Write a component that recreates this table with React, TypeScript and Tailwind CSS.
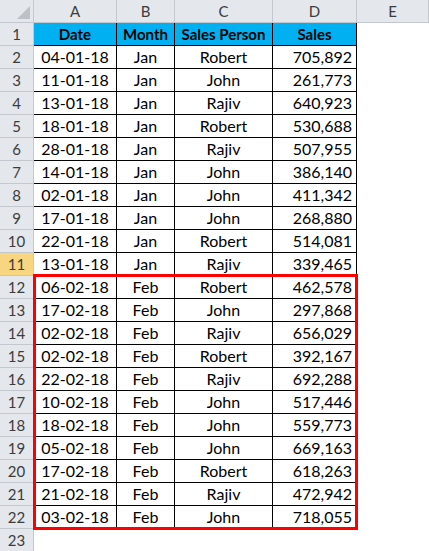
const rows: [string, string, string, string][] = [
  ["04-01-18", "Jan", "Robert", "705,892"],
  ["11-01-18", "Jan", "John", "261,773"],
  ["13-01-18", "Jan", "Rajiv", "640,923"],
  ["18-01-18", "Jan", "Robert", "530,688"],
  ["28-01-18", "Jan", "Rajiv", "507,955"],
  ["14-01-18", "Jan", "John", "386,140"],
  ["02-01-18", "Jan", "John", "411,342"],
  ["17-01-18", "Jan", "John", "268,880"],
  ["22-01-18", "Jan", "Robert", "514,081"],
  ["13-01-18", "Jan", "Rajiv", "339,465"],
  ["06-02-18", "Feb", "Robert", "462,578"],
  ["17-02-18", "Feb", "John", "297,868"],
  ["02-02-18", "Feb", "Rajiv", "656,029"],
  ["02-02-18", "Feb", "Robert", "392,167"],
  ["22-02-18", "Feb", "Rajiv", "692,288"],
  ["10-02-18", "Feb", "John", "517,446"],
  ["18-02-18", "Feb", "John", "559,773"],
  ["05-02-18", "Feb", "John", "669,163"],
  ["17-02-18", "Feb", "Robert", "618,263"],
  ["21-02-18", "Feb", "Rajiv", "472,942"],
  ["03-02-18", "Feb", "John", "718,055"],
];

const cols = "grid grid-cols-[34px_83px_58px_98px_84px_1fr]";
const rowHead = "flex h-[23px] items-center justify-center border-r border-b border-[#c3c8ce] text-[15px] text-[#3c3c3c]";
const cell = "flex h-[23px] items-center border-r border-b border-black";

function RowHeader({ n }: { n: number }) {
  return (
    <div className={rowHead + (n === 11 ? " bg-[#f8d580]" : " bg-[#e4e7eb]")}>{n}</div>
  );
}

export default function App() {
  return (
    <div
      className="relative h-[551px] w-[429px] overflow-hidden bg-white text-[16px] leading-none text-black"
      style={{ fontFamily: "Lato, 'Open Sans', sans-serif" }}
    >
      {/* column letters */}
      <div className={cols}>
        <div className="relative h-[23px] border-r border-b border-[#c3c8ce] bg-[#e4e7eb]">
          <svg className="absolute right-[3px] bottom-[3px]" width="13" height="13" viewBox="0 0 13 13">
            <polygon points="13,0 13,13 0,13" fill="#bcc1c7" />
          </svg>
        </div>
        {["A", "B", "C", "D", "E"].map((c) => (
          <div key={c} className="flex h-[23px] items-center justify-center border-r border-b border-[#c3c8ce] bg-[#e4e7eb] text-[15px] text-[#3c3c3c]">
            {c}
          </div>
        ))}
      </div>

      {/* header row */}
      <div className={cols}>
        <RowHeader n={1} />
        {["Date", "Month", "Sales Person", "Sales"].map((h) => (
          <div key={h} className={cell + " justify-center bg-[#00b0f0] text-[15px] font-bold"}>
            {h}
          </div>
        ))}
        <div />
      </div>

      {rows.map((r, i) => (
        <div key={i} className={cols}>
          <RowHeader n={i + 2} />
          <div className={cell + " justify-center"}>{r[0]}</div>
          <div className={cell + " justify-center"}>{r[1]}</div>
          <div className={cell + " justify-center"}>{r[2]}</div>
          <div className={cell + " justify-end pr-[4px]"}>{r[3]}</div>
          <div />
        </div>
      ))}

      <div className={cols}>
        <RowHeader n={23} />
      </div>

      {/* red outline around the Feb rows */}
      <div className="pointer-events-none absolute left-[33px] top-[274px] h-[256px] w-[325px] border-[3px] border-[#ff0000]" />
    </div>
  );
}
